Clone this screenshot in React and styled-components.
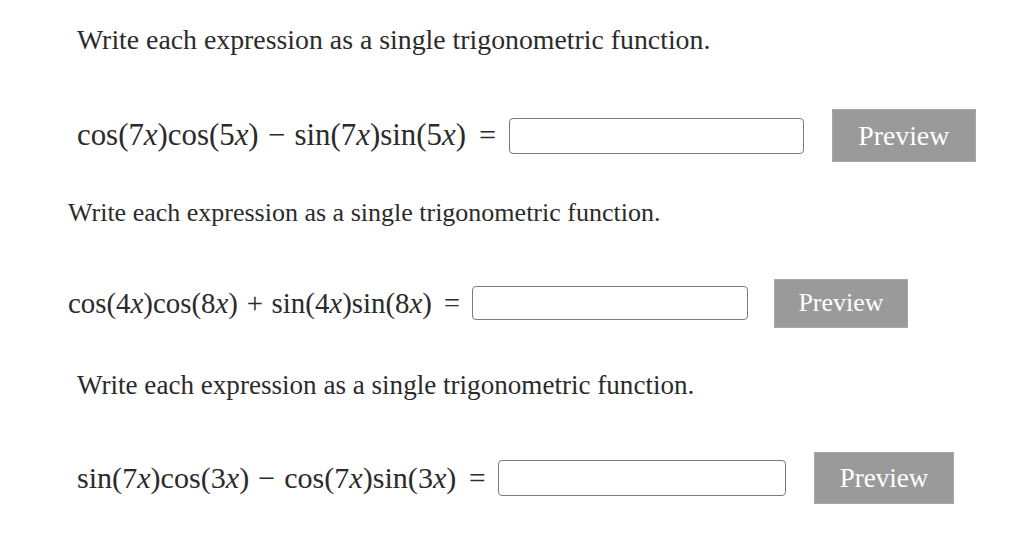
import styled, { createGlobalStyle } from "styled-components";

const GlobalStyle = createGlobalStyle`
  html, body {
    margin: 0;
    padding: 0;
    background: #ffffff;
  }
  body {
    font-family: "Liberation Serif", "Times New Roman", serif;
    color: #2b2b2b;
  }
`;

const problems = [
  {
    id: 1,
    fs: 27.8,
    left: 77,
    top: 23,
    gap: 53,
    inputW: 295,
    inputH: 36,
    btnW: 144,
    btnH: 53,
    btnGap: 28,
    terms: [
      ["cos", "7"],
      ["cos", "5"],
      "−",
      ["sin", "7"],
      ["sin", "5"],
    ],
  },
  {
    id: 2,
    fs: 26,
    left: 68,
    top: 35,
    gap: 50,
    inputW: 276,
    inputH: 34,
    btnW: 134,
    btnH: 49,
    btnGap: 26,
    terms: [
      ["cos", "4"],
      ["cos", "8"],
      "+",
      ["sin", "4"],
      ["sin", "8"],
    ],
  },
  {
    id: 3,
    fs: 27.1,
    left: 77,
    top: 41,
    gap: 51,
    inputW: 288,
    inputH: 36,
    btnW: 140,
    btnH: 52,
    btnGap: 28,
    terms: [
      ["sin", "7"],
      ["cos", "3"],
      "−",
      ["cos", "7"],
      ["sin", "3"],
    ],
  },
];

const Page = styled.div`
  width: 1024px;
  height: 560px;
  overflow: hidden;
  display: flex;
  flex-direction: column;
`;

const Block = styled.section`
  display: flex;
  flex-direction: column;
  padding-left: ${(p) => p.$left}px;
  margin-top: ${(p) => p.$top}px;
  gap: ${(p) => p.$gap}px;
  font-size: ${(p) => p.$fs}px;
`;

const Heading = styled.p`
  margin: 0;
  line-height: 1.2;
`;

const Row = styled.div`
  display: flex;
  align-items: center;
`;

const Math = styled.span`
  display: inline-flex;
  align-items: baseline;
  white-space: nowrap;
  font-size: 1.11em;
`;

const Var = styled.i`
  font-style: italic;
`;

const Op = styled.span`
  margin: 0 0.3em;
`;

const Equals = styled.span`
  margin: 0 0.42em 0 0.43em;
  font-size: 1.09em;
`;

const Answer = styled.input`
  box-sizing: border-box;
  width: ${(p) => p.$w}px;
  height: ${(p) => p.$h}px;
  border: 1px solid #7a7a7a;
  border-radius: 4px;
  background: #fff;
  padding: 0 6px;
  font: inherit;
`;

const PreviewButton = styled.button`
  box-sizing: border-box;
  width: ${(p) => p.$w}px;
  height: ${(p) => p.$h}px;
  margin-left: ${(p) => p.$gap}px;
  border: 1px solid #a8a8a8;
  background: #9a9a9a;
  color: #ffffff;
  font-family: "Liberation Serif", "Times New Roman", serif;
  font-size: 1em;
  padding: 0;
`;

const Term = ({ fn, k }) => (
  <span>
    {fn}({k}
    <Var>x</Var>)
  </span>
);

export default function App() {
  return (
    <Page>
      <GlobalStyle />
      {problems.map((p) => (
        <Block key={p.id} $fs={p.fs} $left={p.left} $top={p.top} $gap={p.gap}>
          <Heading>Write each expression as a single trigonometric function.</Heading>
          <Row>
            <Math>
              {p.terms.map((t, i) =>
                typeof t === "string" ? (
                  <Op key={i}>{t}</Op>
                ) : (
                  <Term key={i} fn={t[0]} k={t[1]} />
                )
              )}
            </Math>
            <Equals>=</Equals>
            <Answer type="text" $w={p.inputW} $h={p.inputH} />
            <PreviewButton $w={p.btnW} $h={p.btnH} $gap={p.btnGap}>
              Preview
            </PreviewButton>
          </Row>
        </Block>
      ))}
    </Page>
  );
}
